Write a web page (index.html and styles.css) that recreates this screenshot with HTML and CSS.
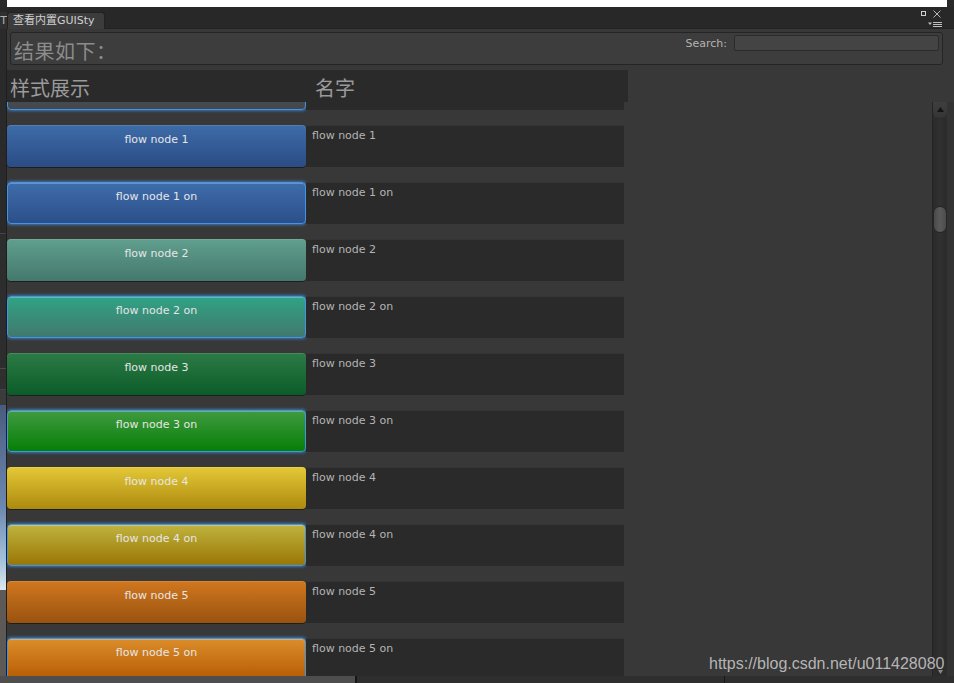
FILE: index.html
```html
<!DOCTYPE html>
<html lang="zh">
<head>
<meta charset="utf-8">
<title>查看内置GUIStyle</title>
<link rel="stylesheet" href="styles.css">
</head>
<body>
<div class="topstrip"><div class="ts-dark"></div><div class="ts-white"></div><div class="ts-rest"></div></div>
<div class="tabbar">
  <div class="stub">T</div>
  <div class="tab">查看内置GUISty</div>
  <svg class="winctl" width="26" height="18" viewBox="0 0 26 18">
    <rect x="1.5" y="1.5" width="4" height="4" fill="#2a2a2a" stroke="#d0d0d0" stroke-width="1"/>
    <path d="M13.5 0.5 L20.5 7.5 M20.5 0.5 L13.5 7.5" stroke="#b8b8b8" stroke-width="1" fill="none"/>
    <path d="M8 12.5 L12 12.5 L10 15 Z" fill="#bdbdbd"/>
    <path d="M13 12.5 H22 M13 14.5 H22 M13 16.5 H22" stroke="#bdbdbd" stroke-width="1"/>
  </svg>
</div>
<div class="main">
  <div class="leftstrip">
    <div class="ls ls1"></div>
    <div class="ls ls2"></div>
    <div class="ls ls3"></div>
    <div class="ls ls4"></div>
    <div class="ls ls5"></div>
    <div class="ls ls6"></div>
  </div>
  <div class="panel">
    <div class="toolbox">
      <div class="result-title">结果如下：</div>
      <div class="search">
        <span class="search-label">Search:</span>
        <div class="search-field"></div>
      </div>
    </div>
    <div class="header">
      <span class="h-col1">样式展示</span>
      <span class="h-col2">名字</span>
    </div>
    <div class="scrollarea">
      <div class="list">
        <div class="list-inner">
          <div class="row"><div class="btn on c0on"></div><div class="name"></div></div>
          <div class="row"><div class="btn c1">flow node 1</div><div class="name">flow node 1</div></div>
          <div class="row"><div class="btn on c1on">flow node 1 on</div><div class="name">flow node 1 on</div></div>
          <div class="row"><div class="btn c2">flow node 2</div><div class="name">flow node 2</div></div>
          <div class="row"><div class="btn on c2on">flow node 2 on</div><div class="name">flow node 2 on</div></div>
          <div class="row"><div class="btn c3">flow node 3</div><div class="name">flow node 3</div></div>
          <div class="row"><div class="btn on c3on">flow node 3 on</div><div class="name">flow node 3 on</div></div>
          <div class="row"><div class="btn c4">flow node 4</div><div class="name">flow node 4</div></div>
          <div class="row"><div class="btn on c4on">flow node 4 on</div><div class="name">flow node 4 on</div></div>
          <div class="row"><div class="btn c5">flow node 5</div><div class="name">flow node 5</div></div>
          <div class="row"><div class="btn on c5on">flow node 5 on</div><div class="name">flow node 5 on</div></div>
        </div>
      </div>
      <div class="spacer"></div>
      <div class="scrollbar">
        <div class="sb-up"><svg width="13" height="16" viewBox="0 0 13 16"><path d="M3 10 L10 10 L6.5 5 Z" fill="#151515"/></svg></div>
        <div class="sb-track"><div class="sb-thumb"></div></div>
        <div class="sb-down"><svg width="13" height="8" viewBox="0 0 13 8"><path d="M4 2 L9 2 L6.5 6 Z" fill="#8a8a8a"/></svg></div>
      </div>
      <div class="redge"></div>
    </div>
  </div>
</div>
<div class="bottomband"><div class="bb1"></div><div class="bb-line"></div><div class="bb2"></div><div class="bb-line2"></div><div class="bb3"></div></div>
<div class="watermark">https://blog.csdn.net/u011428080</div>
</body>
</html>
```
FILE: styles.css
```css
html, body {
  margin: 0;
  padding: 0;
}
body {
  width: 954px;
  height: 683px;
  overflow: hidden;
  background: #282828;
  font-family: "DejaVu Sans", "Noto Sans CJK SC", sans-serif;
  position: relative;
}
.topstrip {
  display: flex;
  height: 7px;
}
.ts-dark { width: 7px; background: #2a2a2a; }
.ts-white { width: 940px; background: #ffffff; }
.ts-rest { flex: 1; background: #2a2a2a; }

.tabbar {
  height: 22px;
  display: flex;
  align-items: flex-end;
  background: #282828;
  box-sizing: border-box;
  border-bottom: 1px solid #232323;
}
.stub {
  width: 7px;
  height: 17px;
  background: #303030;
  color: #b0b0b0;
  font-size: 11px;
  line-height: 17px;
  overflow: hidden;
  text-align: right;
  direction: rtl;
  margin-bottom: -1px;
}
.tab {
  width: 98px;
  height: 17px;
  box-sizing: border-box;
  background: #3c3c3c;
  border: 1px solid #222;
  border-bottom: none;
  border-radius: 3px 3px 0 0;
  color: #cfcfcf;
  font-size: 11px;
  line-height: 16px;
  padding-left: 5px;
  white-space: nowrap;
  overflow: hidden;
  margin-bottom: -1px;
}
.winctl {
  margin-left: auto;
  margin-right: 8px;
  align-self: flex-start;
  margin-top: 3px;
}

.main {
  display: flex;
  height: 647px;
}
.leftstrip {
  width: 6px;
  display: flex;
  flex-direction: column;
}
.ls1 { height: 204px; background: #2a2a2a; border-bottom: 1px solid #444; }
.ls2 { height: 134px; background: #2d2d2d; border-bottom: 1px solid #4a4a4a; }
.ls3 { height: 20px; background: #2f2f2f; border-bottom: 1px solid #444; }
.ls4 { height: 15px; background: #3b3b3b; }
.ls5 { height: 185px; background: linear-gradient(#4a5c7e, #6c88b0 55%, #a8c4dc 85%, #dce8ee); }
.ls6 { flex: 1; background: #5c5956; }

.panel {
  flex: 1;
  background: #383838;
  border-left: 1px solid #1e1e1e;
  padding-top: 3px;
  display: flex;
  flex-direction: column;
}
.toolbox {
  margin: 0 11px 0 3px;
  height: 33px;
  box-sizing: border-box;
  background: #3d3d3d;
  border: 1px solid #252525;
  border-radius: 3px;
  display: flex;
  align-items: flex-start;
}
.result-title {
  font-family: "Noto Sans CJK SC", sans-serif;
  font-size: 20px;
  line-height: 28px;
  color: #8c8c8c;
  padding-left: 3px;
  padding-top: 4px;
  letter-spacing: 0.5px;
}
.search {
  margin-left: auto;
  margin-right: 3px;
  margin-top: 2px;
  display: flex;
  align-items: center;
}
.search-label {
  color: #b4b4b4;
  font-size: 11px;
  margin-right: 7px;
}
.search-field {
  width: 205px;
  height: 16px;
  box-sizing: border-box;
  background: #444444;
  border: 1px solid #2b2b2b;
  border-radius: 2px;
}

.header {
  margin-top: 5px;
  width: 621px;
  height: 32px;
  background: #2a2a2a;
  display: flex;
  align-items: center;
  padding-left: 3px;
  padding-top: 2px;
  box-sizing: border-box;
  font-family: "Noto Sans CJK SC", sans-serif;
  font-size: 20px;
  color: #9a9a9a;
}
.h-col1 { width: 305px; }

.scrollarea {
  flex: 1;
  display: flex;
  min-height: 0;
}
.list {
  width: 617px;
  overflow: hidden;
}
.list-inner {
  margin-top: -34px;
  display: flex;
  flex-direction: column;
  gap: 15px;
}
.row {
  display: flex;
  height: 42px;
}
.btn {
  width: 299px;
  height: 42px;
  box-sizing: border-box;
  border-radius: 4px;
  color: #e6e6e6;
  font-size: 11px;
  line-height: 14px;
  padding-top: 8px;
  text-align: center;
  box-shadow: 0 1px 0 rgba(0, 0, 0, 0.45), inset 0 1px 0 rgba(255, 255, 255, 0.12);
}
.btn.on {
  border: 1px solid #4294e6;
  padding-top: 7px;
  box-shadow: 0 0 3px 1px rgba(60, 145, 235, 0.7), inset 0 1px 0 rgba(255, 255, 255, 0.25);
}
.c0on { background: linear-gradient(#52575c, #44484d); }
.c1 { background: linear-gradient(#3d6ca8, #2b4c84); }
.c1on { background: linear-gradient(#3e6dab, #2c4f89); }
.c2 { background: linear-gradient(#609f8e, #44786c); }
.c2on { background: linear-gradient(#30a384, #41786e); }
.c3 { background: linear-gradient(#2c7b46, #0c5c29); }
.c3on { background: linear-gradient(#409a40, #067f06); }
.c4 { background: linear-gradient(#e5c937, #ac8a0e); }
.c4on { background: linear-gradient(#c0b33e, #9a7605); }
.c5 { background: linear-gradient(#d1771f, #99530f); }
.c5on { background: linear-gradient(#db8d2b, #b75b03); }

.name {
  width: 318px;
  height: 42px;
  box-sizing: border-box;
  background: #2a2a2a;
  box-shadow: inset 0 1px 0 #353535;
  color: #b4b4b4;
  font-size: 11px;
  line-height: 14px;
  padding: 4px 0 0 6px;
  white-space: nowrap;
}
.spacer { flex: 1; }

.scrollbar {
  width: 15px;
  display: flex;
  flex-direction: column;
  background: #2c2c2c;
  box-sizing: border-box;
  border-left: 1px solid #242424;
}
.sb-up {
  height: 16px;
  background: linear-gradient(#3e3e3e, #353535);
  border-radius: 0 0 6px 6px;
  display: flex;
  justify-content: center;
}
.sb-track {
  flex: 1;
  background: linear-gradient(90deg, #2a2a2a, #313131 50%, #2a2a2a);
  border-radius: 6px;
  margin-top: 1px;
}
.sb-thumb {
  margin-top: 87px;
  height: 27px;
  border-radius: 7px;
  background: linear-gradient(90deg, #4a4a4a, #5a5a5a 50%, #4c4c4c);
  border: 1px solid #262626;
  box-sizing: border-box;
}
.sb-down {
  height: 8px;
  display: flex;
  justify-content: center;
}
.redge {
  width: 7px;
  background: #333333;
}

.bottomband {
  display: flex;
  height: 7px;
}
.bb1 { width: 355px; background: #4e4e4e; }
.bb-line { width: 2px; background: #161616; }
.bb2 { width: 367px; background: #2e2e2e; }
.bb-line2 { width: 1px; background: #181818; }
.bb3 { flex: 1; background: #2e2e2e; }

.watermark {
  position: absolute;
  left: 709px;
  top: 654px;
  font-family: "Liberation Sans", Arial, sans-serif;
  font-size: 16px;
  line-height: 19px;
  color: rgba(215, 215, 215, 0.8);
  white-space: nowrap;
}
```
